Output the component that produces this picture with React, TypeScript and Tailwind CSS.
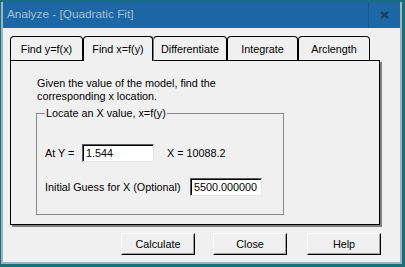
const ui = { fontFamily: '"Liberation Sans", Arial, sans-serif' };

const tabs = [
  { label: "Find y=f(x)", w: "w-[73px]" },
  { label: "Find x=f(y)", w: "w-[70px]", active: true },
  { label: "Differentiate", w: "w-[74px]" },
  { label: "Integrate", w: "w-[71px]" },
  { label: "Arclength", w: "w-[72px]" },
];

function Tab({ label, w, active }: { label: string; w: string; active?: boolean }) {
  return (
    <div
      className={
        "flex items-center justify-center border border-black rounded-t-[4px] bg-[#f0f0f0] text-[10.8px] text-black pt-[1px] " +
        w +
        (active
          ? " h-[25px] border-b-0 -mb-px relative z-10 shadow-[1px_0_0_#808080]"
          : " h-[24px] border-b-0")
      }
    >
      {label}
    </div>
  );
}

function Field({ value, w }: { value: string; w: string }) {
  return (
    <div
      className={
        "h-[18px] bg-white border border-t-[#5a5a5a] border-l-[#5a5a5a] border-b-[#e6e6e6] border-r-[#e6e6e6] shadow-[inset_1px_1px_0_#000] pl-[3px] flex items-center text-[10.8px] text-black " +
        w
      }
    >
      {value}
    </div>
  );
}

function Button({ label, ml }: { label: string; ml: string }) {
  return (
    <button
      className={
        "w-[74px] h-[22px] bg-[#f0f0f0] border border-t-white border-l-white border-b-black border-r-black shadow-[inset_-1px_-1px_0_#a0a0a0] text-[10.8px] text-black flex items-center justify-center " +
        ml
      }
    >
      {label}
    </button>
  );
}

export default function App() {
  return (
    <div style={ui} className="w-[405px] h-[267px] bg-[#17707a] pt-[2px] pl-px pr-[3px] pb-[3px]">
      <div className="h-full flex flex-col border-x-2 border-b-2 border-[#9bb4c7]">
        <div className="h-[26px] bg-[#1d68a4] flex items-center">
          <span className="flex-1 pl-[4px] text-[11.8px] text-[#a6bdd4]">Analyze - [Quadratic Fit]</span>
          <div className="w-[32px] h-full border-l border-[#175a8e] flex items-center justify-center">
            <svg width="9" height="8" viewBox="0 0 9 8">
              <path d="M1 1 L8 7 M8 1 L1 7" stroke="#1b3c60" strokeWidth="2.2" />
            </svg>
          </div>
        </div>

        <div className="flex-1 bg-[#f0f0f0] pt-[8px] pl-[7px]">
          <div className="flex items-end w-[370px]">
            {tabs.map((t) => (
              <Tab key={t.label} {...t} />
            ))}
          </div>
          <div className="w-[370px] h-[165px] border border-black shadow-[2px_2px_0_#808080] pt-[16px] pl-[26px] text-[10.8px] text-black">
            <p className="leading-[13px]">Given the value of the model, find the</p>
            <p className="leading-[13px]">corresponding x location.</p>
            <fieldset className="mt-[4px] w-[248px] h-[108px] border border-[#888888] pl-[8px] pr-0 pt-0 pb-0 ml-[-1px]">
              <legend className="px-[1px] leading-[13px] text-[10.8px]">Locate an X value, x=f(y)</legend>
              <div className="flex items-center mt-[24px]">
                <span className="w-[37px]">At Y =</span>
                <Field value="1.544" w="w-[72px]" />
                <span className="ml-[13px]">X = 10088.2</span>
              </div>
              <div className="flex items-center mt-[16px]">
                <span className="w-[145px]">Initial Guess for X (Optional)</span>
                <Field value="5500.000000" w="w-[72px]" />
              </div>
            </fieldset>
          </div>
          <div className="flex mt-[8px]">
            <Button label="Calculate" ml="ml-[111px]" />
            <Button label="Close" ml="ml-[18px]" />
            <Button label="Help" ml="ml-[20px]" />
          </div>
        </div>
      </div>
    </div>
  );
}
